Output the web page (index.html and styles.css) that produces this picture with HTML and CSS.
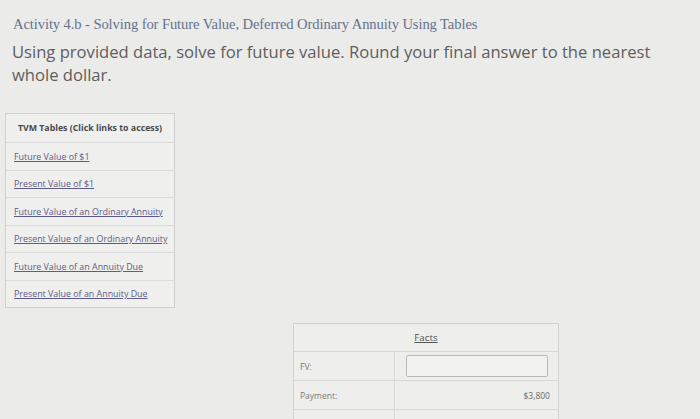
FILE: index.html
```html
<!DOCTYPE html>
<html>
<head>
<meta charset="utf-8">
<link rel="stylesheet" href="styles.css">
</head>
<body>
<div class="page">
  <h1 class="title">Activity 4.b - Solving for Future Value, Deferred Ordinary Annuity Using Tables</h1>
  <p class="prompt">Using provided data, solve for future value. Round your final answer to the nearest whole dollar.</p>

  <div class="tvm">
    <div class="tvm-head">TVM Tables (Click links to access)</div>
    <div class="tvm-row"><a class="link">Future Value of $1</a></div>
    <div class="tvm-row"><a class="link">Present Value of $1</a></div>
    <div class="tvm-row"><a class="link">Future Value of an Ordinary Annuity</a></div>
    <div class="tvm-row"><a class="link">Present Value of an Ordinary Annuity</a></div>
    <div class="tvm-row"><a class="link">Future Value of an Annuity Due</a></div>
    <div class="tvm-row"><a class="link">Present Value of an Annuity Due</a></div>
  </div>

  <div class="facts-wrap">
    <div class="facts">
      <div class="facts-head">Facts</div>
      <div class="facts-row">
        <div class="label">FV:</div>
        <div class="value"><div class="input"></div></div>
      </div>
      <div class="facts-row">
        <div class="label">Payment:</div>
        <div class="value num">$3,800</div>
      </div>
      <div class="facts-row">
        <div class="label"></div>
        <div class="value"></div>
      </div>
    </div>
  </div>
</div>
</body>
</html>
```

FILE: styles.css
```css
html, body {
  margin: 0;
  padding: 0;
  background: #ebebea;
  overflow: hidden;
}
.page {
  width: 700px;
  height: 419px;
  padding: 16px 0 0 0;
  box-sizing: border-box;
  overflow: hidden;
}
.title {
  margin: 0 0 0 13px;
  font-family: "Liberation Serif", serif;
  font-weight: normal;
  font-size: 14.6px;
  line-height: 17px;
  color: #66728d;
  letter-spacing: -0.1px;
}
.prompt {
  margin: 7px 30px 0 12px;
  font-family: "Open Sans", sans-serif;
  font-size: 16.6px;
  line-height: 23px;
  color: #5e5e5e;
}
.tvm {
  margin: 27px 0 0 5px;
  width: 168px;
  border: 1px solid #cfcfcf;
  background: #efefee;
  font-family: "Open Sans", sans-serif;
}
.tvm-head {
  height: 28px;
  display: flex;
  align-items: center;
  justify-content: center;
  font-size: 8.8px;
  font-weight: bold;
  color: #4a4a4a;
  border-bottom: 1px solid #dcdcdc;
}
.tvm-row {
  height: 26.5px;
  display: flex;
  align-items: center;
  padding-left: 8px;
  border-bottom: 1px solid #dcdcdc;
}
.tvm-row:last-child {
  border-bottom: none;
}
.link {
  font-size: 8.9px;
  color: #5e5c86;
  text-decoration: underline;
  white-space: nowrap;
}
.facts-wrap {
  margin: 15px 0 0 293px;
}
.facts {
  width: 264px;
  border: 1px solid #d2d2d2;
  border-bottom: none;
  background: #eeeeed;
  font-family: "Open Sans", sans-serif;
}
.facts-head {
  height: 27px;
  display: flex;
  align-items: center;
  justify-content: center;
  font-size: 9.8px;
  color: #555;
  text-decoration: underline;
  border-bottom: 1px solid #d8d8d8;
}
.facts-row {
  display: flex;
  height: 28px;
  border-bottom: 1px solid #d8d8d8;
}
.label {
  width: 101px;
  border-right: 1px solid #d8d8d8;
  display: flex;
  align-items: center;
  padding-left: 6px;
  box-sizing: border-box;
  font-size: 8.5px;
  color: #7a7a7a;
}
.value {
  flex: 1;
  display: flex;
  align-items: center;
  justify-content: flex-end;
  padding: 0 8px 0 9px;
  font-size: 8.5px;
  color: #6a6a6a;
}
.value:has(.input) {
  padding-right: 10px;
}
.input {
  width: 142px;
  height: 22px;
  border: 1px solid #b8b8b8;
  border-radius: 2px;
  background: #f2f2f1;
  box-sizing: border-box;
}
```
